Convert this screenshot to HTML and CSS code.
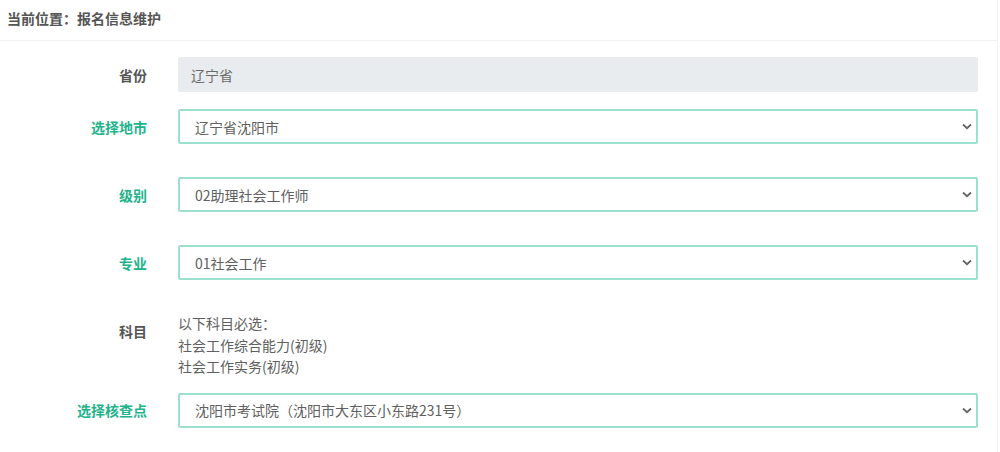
FILE: index.html
```html
<!DOCTYPE html>
<html lang="zh-CN">
<head>
	<meta charset="UTF-8">
	<title>报名信息维护</title>
	<link rel="stylesheet" href="styles.css">
</head>
<body>
	<div class="page">
		<div class="crumb">当前位置：报名信息维护</div>
		<div class="form">
			<div class="row first">
				<div class="label">省份</div>
				<div class="field readonly">辽宁省</div>
			</div>
			<div class="row city">
				<div class="label req">选择地市</div>
				<div class="field select">
					<span>辽宁省沈阳市</span>
					<svg width="10" height="7" viewBox="0 0 10 7"><path d="M1 1.5 L5 5.2 L9 1.5" fill="none" stroke="#666" stroke-width="1.8"/></svg>
				</div>
			</div>
			<div class="row">
				<div class="label req">级别</div>
				<div class="field select">
					<span>02助理社会工作师</span>
					<svg width="10" height="7" viewBox="0 0 10 7"><path d="M1 1.5 L5 5.2 L9 1.5" fill="none" stroke="#666" stroke-width="1.8"/></svg>
				</div>
			</div>
			<div class="row">
				<div class="label req">专业</div>
				<div class="field select">
					<span>01社会工作</span>
					<svg width="10" height="7" viewBox="0 0 10 7"><path d="M1 1.5 L5 5.2 L9 1.5" fill="none" stroke="#666" stroke-width="1.8"/></svg>
				</div>
			</div>
			<div class="row subject">
				<div class="label">科目</div>
				<div class="lines">
					以下科目必选：<br>
					社会工作综合能力(初级)<br>
					社会工作实务(初级)
				</div>
			</div>
			<div class="row check">
				<div class="label req">选择核查点</div>
				<div class="field select">
					<span>沈阳市考试院（沈阳市大东区小东路231号）</span>
					<svg width="10" height="7" viewBox="0 0 10 7"><path d="M1 1.5 L5 5.2 L9 1.5" fill="none" stroke="#666" stroke-width="1.8"/></svg>
				</div>
			</div>
		</div>
	</div>
</body>
</html>
```

FILE: styles.css
```css
*{margin: 0;padding: 0;box-sizing: border-box;}
body{font-family: "Noto Sans CJK SC", "Liberation Sans", sans-serif;font-size: 14px;color: #606060;background: #fff;}
.page{width: 998px;height: 452px;border-right: 1px solid #f2f2f2;}
.crumb{height: 41px;line-height: 36px;padding-left: 7px;font-weight: bold;color: #555;border-bottom: 1px solid #f1f1f1;}
.form{padding-top: 16px;}
.row{display: flex;align-items: center;margin-top: 33px;}
.row.first{margin-top: 0;}
.row.city{margin-top: 17px;}
.row.check{margin-top: 15px;}
.label{width: 147px;text-align: right;font-weight: bold;color: #555;margin-right: 31px;}
.label.req{color: #22b38b;}
.field{width: 800px;height: 35px;padding-left: 13px;display: flex;align-items: center;border-radius: 2px;}
.readonly{background: #e9ecef;color: #6a6a6a;}
.select{border: 2px solid #9ee0cf;justify-content: space-between;padding-right: 4px;padding-left: 15px;}
.select span{color: #606060;}
.row.subject{align-items: flex-start;}
.subject .label{padding-top: 8px;line-height: 20px;}
.lines{line-height: 21.5px;color: #606060;}
```
